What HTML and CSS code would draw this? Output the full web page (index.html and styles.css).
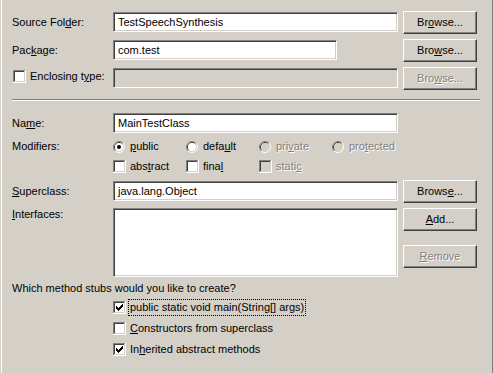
FILE: index.html
```html
<!DOCTYPE html>
<html>
<head>
<meta charset="utf-8">
<link rel="stylesheet" href="styles.css">
</head>
<body>
<svg class="defs" width="0" height="0" aria-hidden="true">
  <defs>
    <symbol id="cb" viewBox="0 0 13 13">
      <rect x="0" y="0" width="13" height="13" fill="#ffffff"/>
      <rect x="0" y="0" width="12" height="12" fill="#808080"/>
      <rect x="1" y="1" width="11" height="11" fill="#d4d0c8"/>
      <rect x="1" y="1" width="10" height="10" fill="#404040"/>
      <rect x="2" y="2" width="9" height="9" fill="#ffffff"/>
    </symbol>
    <symbol id="cbd" viewBox="0 0 13 13">
      <rect x="0" y="0" width="13" height="13" fill="#ffffff"/>
      <rect x="0" y="0" width="12" height="12" fill="#808080"/>
      <rect x="1" y="1" width="11" height="11" fill="#d4d0c8"/>
      <rect x="1" y="1" width="10" height="10" fill="#404040"/>
      <rect x="2" y="2" width="9" height="9" fill="#d4d0c8"/>
    </symbol>
    <symbol id="tick" viewBox="0 0 13 13">
      <g fill="#000">
        <rect x="9" y="3" width="1" height="1"/>
        <rect x="8" y="4" width="2" height="1"/>
        <rect x="3" y="5" width="1" height="1"/>
        <rect x="7" y="5" width="3" height="1"/>
        <rect x="3" y="6" width="2" height="1"/>
        <rect x="6" y="6" width="3" height="1"/>
        <rect x="3" y="7" width="5" height="1"/>
        <rect x="4" y="8" width="3" height="1"/>
        <rect x="5" y="9" width="1" height="1"/>
      </g>
    </symbol>
    <symbol id="rb" viewBox="0 0 12 12">
      <path d="M2.11 9.89 A5.5 5.5 0 0 1 9.89 2.11" fill="none" stroke="#808080" stroke-width="1"/>
      <path d="M9.89 2.11 A5.5 5.5 0 0 1 2.11 9.89" fill="none" stroke="#ffffff" stroke-width="1"/>
      <path d="M2.82 9.18 A4.5 4.5 0 0 1 9.18 2.82" fill="none" stroke="#404040" stroke-width="1"/>
      <path d="M9.18 2.82 A4.5 4.5 0 0 1 2.82 9.18" fill="none" stroke="#d4d0c8" stroke-width="1"/>
      <circle cx="6" cy="6" r="4" fill="#ffffff"/>
    </symbol>
    <symbol id="rbd" viewBox="0 0 12 12">
      <path d="M2.11 9.89 A5.5 5.5 0 0 1 9.89 2.11" fill="none" stroke="#808080" stroke-width="1"/>
      <path d="M9.89 2.11 A5.5 5.5 0 0 1 2.11 9.89" fill="none" stroke="#ffffff" stroke-width="1"/>
      <path d="M2.82 9.18 A4.5 4.5 0 0 1 9.18 2.82" fill="none" stroke="#404040" stroke-width="1"/>
      <path d="M9.18 2.82 A4.5 4.5 0 0 1 2.82 9.18" fill="none" stroke="#d4d0c8" stroke-width="1"/>
      <circle cx="6" cy="6" r="4" fill="#d4d0c8"/>
    </symbol>
  </defs>
</svg>

<div class="frame">
  <div class="row">
    <div class="lbl">Source Fol<u>d</u>er:</div>
    <div class="cell"><div class="field w-full">TestSpeechSynthesis</div></div>
    <div class="btn">Br<u>o</u>wse...</div>
  </div>

  <div class="row">
    <div class="lbl">Pac<u>k</u>age:</div>
    <div class="cell"><div class="field w-pkg">com.test</div></div>
    <div class="btn">Bro<u>w</u>se...</div>
  </div>

  <div class="row">
    <div class="lbl lbl-chk">
      <svg class="box" width="13" height="13"><use href="#cb"/></svg>
      <span>Enclosing t<u>y</u>pe:</span>
    </div>
    <div class="cell"><div class="field w-full dis"></div></div>
    <div class="btn dis">Bro<u>w</u>se...</div>
  </div>

  <div class="sep"></div>

  <div class="row">
    <div class="lbl">Na<u>m</u>e:</div>
    <div class="cell"><div class="field w-full">MainTestClass</div></div>
  </div>

  <div class="mrow">
    <div class="lbl lbl-flat">Modifiers:</div>
    <div class="opt">
      <svg class="radio" width="12" height="12" viewBox="0 0 12 12"><use href="#rb"/><circle cx="6" cy="6" r="2" fill="#000"/></svg>
      <span><u>p</u>ublic</span>
    </div>
    <div class="opt">
      <svg class="radio" width="12" height="12"><use href="#rb"/></svg>
      <span>defa<u>u</u>lt</span>
    </div>
    <div class="opt">
      <svg class="radio" width="12" height="12"><use href="#rbd"/></svg>
      <span class="distext">pri<u>v</u>ate</span>
    </div>
    <div class="opt">
      <svg class="radio" width="12" height="12"><use href="#rbd"/></svg>
      <span class="distext">pro<u>t</u>ected</span>
    </div>
  </div>

  <div class="mrow">
    <div class="lbl lbl-flat"></div>
    <div class="opt opt-c">
      <svg class="box" width="13" height="13"><use href="#cb"/></svg>
      <span>abs<u>t</u>ract</span>
    </div>
    <div class="opt opt-c">
      <svg class="box" width="13" height="13"><use href="#cb"/></svg>
      <span>fina<u>l</u></span>
    </div>
    <div class="opt opt-c">
      <svg class="box" width="13" height="13"><use href="#cbd"/></svg>
      <span class="distext">stati<u>c</u></span>
    </div>
  </div>

  <div class="row">
    <div class="lbl"><u>S</u>uperclass:</div>
    <div class="cell"><div class="field w-full">java.lang.Object</div></div>
    <div class="btn">Brows<u>e</u>...</div>
  </div>

  <div class="row row-list">
    <div class="lbl lbl-flat"><u>I</u>nterfaces:</div>
    <div class="cell cell-flat"><div class="list"></div></div>
    <div class="btncol">
      <div class="btn"><u>A</u>dd...</div>
      <div class="btn dis"><u>R</u>emove</div>
    </div>
  </div>

  <div class="question">Which method stubs would you like to create?</div>

  <div class="crow">
    <svg class="box" width="13" height="13"><use href="#cb"/><use href="#tick"/></svg>
    <span class="focus">public static void main(Strin<u>g</u>[] args)</span>
  </div>
  <div class="crow">
    <svg class="box" width="13" height="13"><use href="#cb"/></svg>
    <span><u>C</u>onstructors from superclass</span>
  </div>
  <div class="crow">
    <svg class="box" width="13" height="13"><use href="#cb"/><use href="#tick"/></svg>
    <span>In<u>h</u>erited abstract methods</span>
  </div>
</div>
</body>
</html>
```

FILE: styles.css
```css
* {
  box-sizing: border-box;
}

html,
body {
  margin: 0;
  padding: 0;
  background: #d4d0c8;
}

body {
  width: 493px;
  height: 373px;
  overflow: hidden;
  font-family: "Liberation Sans", Arial, sans-serif;
  font-size: 11px;
  color: #000;
}

.defs {
  display: block;
  width: 0;
  height: 0;
  overflow: hidden;
}

.frame {
  margin-left: 1px;
  width: 492px;
  height: 373px;
  border-left: 1px solid #ffffff;
  border-right: 1px solid #808080;
  padding: 11px 0 0 10px;
}

u {
  text-decoration: underline;
  text-underline-offset: 1px;
}

.row {
  display: flex;
  align-items: flex-start;
  height: 23px;
  margin-bottom: 5px;
}

.lbl {
  width: 101px;
  flex: none;
  line-height: 13px;
  padding-top: 5px;
  white-space: nowrap;
}

.lbl-flat {
  padding-top: 0;
}

.lbl-chk {
  display: flex;
  align-items: center;
  gap: 4px;
  padding-top: 3px;
  padding-left: 1px;
}

.cell {
  width: 290px;
  flex: none;
  padding-top: 1px;
}

.cell-flat {
  padding-top: 0;
}

.field {
  height: 20px;
  border: 1px solid;
  border-color: #808080 #ffffff #ffffff #808080;
  box-shadow: inset 1px 1px 0 #404040, inset -1px -1px 0 #d4d0c8;
  background: #ffffff;
  padding: 0 4px;
  line-height: 18px;
  white-space: nowrap;
  overflow: hidden;
}

.field.dis {
  background: #d4d0c8;
}

.w-full {
  width: 285px;
}

.w-pkg {
  width: 224px;
}

.btn {
  width: 74px;
  height: 23px;
  flex: none;
  border: 1px solid;
  border-color: #ffffff #404040 #404040 #ffffff;
  box-shadow: inset -1px -1px 0 #808080;
  text-align: center;
  line-height: 21px;
  white-space: nowrap;
}

.btn.dis,
.distext {
  color: #808080;
  text-shadow: 1px 1px 0 #ffffff;
}

.sep {
  width: 468px;
  height: 2px;
  border-top: 1px solid #808080;
  border-bottom: 1px solid #ffffff;
  margin: 9px 0 11px;
}

.mrow {
  display: flex;
  align-items: center;
  height: 13px;
  margin-bottom: 7px;
  line-height: 13px;
}

.opt {
  width: 73px;
  flex: none;
  display: flex;
  align-items: center;
  gap: 5px;
  white-space: nowrap;
}

.opt-c {
  gap: 4px;
}

.radio,
.box {
  display: block;
  flex: none;
}

.row-list {
  height: 69px;
}

.list {
  width: 285px;
  height: 69px;
  border: 1px solid;
  border-color: #808080 #ffffff #ffffff #808080;
  box-shadow: inset 1px 1px 0 #404040, inset -1px -1px 0 #d4d0c8;
  background: #ffffff;
}

.btncol {
  display: flex;
  flex-direction: column;
  gap: 14px;
}

.question {
  height: 13px;
  line-height: 13px;
  margin-bottom: 6px;
  white-space: nowrap;
}

.crow {
  display: flex;
  align-items: center;
  gap: 4px;
  height: 13px;
  line-height: 13px;
  padding-left: 101px;
  margin-bottom: 8px;
  white-space: nowrap;
}

.focus {
  outline: 1px dotted #000;
  outline-offset: 1px;
}
```
